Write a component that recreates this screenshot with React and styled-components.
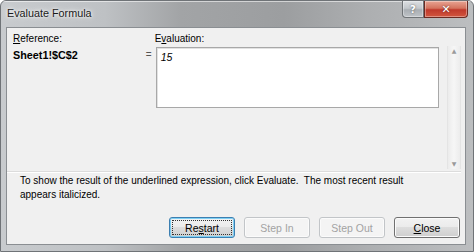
import styled, { createGlobalStyle } from "styled-components";

const GlobalStyle = createGlobalStyle`
  html, body { margin: 0; padding: 0; background: #ffffff; }
  body { font-family: "Liberation Sans", Arial, sans-serif; }
`;

const Window = styled.div`
  width: 474px;
  height: 252px;
  display: flex;
  flex-direction: column;
  box-sizing: border-box;
  border: 1px solid #6f7377;
  border-radius: 6px 6px 0 0;
  background: linear-gradient(
    to right,
    #c8cbce 0%,
    #bec1c4 22%,
    #a2a4a6 38%,
    #9c9ea0 60%,
    #adafb1 78%,
    #bcbec0 100%
  );
  overflow: hidden;
`;

const TitleBar = styled.div`
  height: 26px;
  display: flex;
  align-items: flex-start;
  justify-content: space-between;
  padding-left: 6px;
  box-shadow: inset 0 1px 0 rgba(255, 255, 255, 0.55);
`;

const Title = styled.div`
  font-size: 10.8px;
  line-height: 25px;
  color: #1a1a1a;
  text-shadow: 0 0 6px #ffffff, 0 0 3px #ffffff;
`;

const Controls = styled.div`
  display: flex;
  margin-right: 5px;
`;

const CaptionButton = styled.div`
  height: 17px;
  width: ${(p) => (p.close ? "44px" : "22px")};
  box-sizing: border-box;
  border: 1px solid ${(p) => (p.close ? "#6b2a22" : "#6f7376")};
  border-top: none;
  border-radius: ${(p) => (p.close ? "0 0 4px 0" : "0 0 0 4px")};
  display: flex;
  align-items: center;
  justify-content: center;
  color: #ffffff;
  font-family: "DejaVu Sans", sans-serif;
  font-weight: bold;
  font-size: ${(p) => (p.close ? "11px" : "10px")};
  text-shadow: 0 0 2px rgba(0, 0, 0, 0.6);
  background: ${(p) =>
    p.close
      ? "linear-gradient(to bottom, #e8a493 0%, #d4735e 45%, #c0392b 55%, #d2563f 100%)"
      : "linear-gradient(to bottom, #dcdfe2 0%, #c4c8cc 45%, #a9aeb3 55%, #bfc3c7 100%)"};
  box-shadow: inset 0 0 0 1px rgba(255, 255, 255, 0.35);
`;

const Client = styled.div`
  flex: 1;
  margin: 0 7px 6px 5px;
  background: #f0f0f0;
  border: 1px solid #8a8e92;
  display: flex;
  flex-direction: column;
  color: #000000;
  font-size: 10px;
`;

const TopPanel = styled.div`
  height: 139px;
  display: flex;
  padding: 4px 0 0 6px;
  border-bottom: 1px solid #dcdcdc;
  box-shadow: 0 1px 0 #ffffff;
  margin-right: 4px;
`;

const LeftCol = styled.div`
  width: 133px;
  display: flex;
  flex-direction: column;
`;

const Label = styled.div`
  line-height: 14px;
  height: 14px;
  white-space: nowrap;
  u { text-decoration-thickness: 1px; text-underline-offset: 1px; }
`;

const RefValue = styled.div`
  font-weight: bold;
  font-size: 10.8px;
  line-height: 16px;
  margin-top: 1px;
`;

const Equals = styled.div`
  width: 9px;
  padding-top: 15px;
  line-height: 16px;
  color: #555555;
  font-size: 10px;
`;

const EvalCol = styled.div`
  width: 285px;
  display: flex;
  flex-direction: column;
`;

const EvalBox = styled.div`
  height: 55px;
  margin-top: 1px;
  margin-left: 1px;
  background: #ffffff;
  border: 1px solid #a8a8a8;
  box-shadow: inset 1px 1px 0 #e2e2e2;
  padding: 2px 4px;
  font-style: italic;
  font-size: 10.5px;
  line-height: 14px;
`;

const ScrollBar = styled.div`
  width: 12px;
  margin: 14px 0 2px 8px;
  display: flex;
  flex-direction: column;
  justify-content: space-between;
  align-items: center;
  background: linear-gradient(to right, #ececec, #f6f6f6 50%, #ececec);
  border-left: 1px solid #e4e4e4;
  border-right: 1px solid #e4e4e4;
  color: #9a9a9a;
  font-size: 6px;
  line-height: 10px;
  font-family: "DejaVu Sans", sans-serif;
`;

const Hint = styled.p`
  margin: 0;
  padding: 2px 0 0 13px;
  line-height: 14px;
  white-space: nowrap;
`;

const ButtonRow = styled.div`
  margin-top: auto;
  display: flex;
  justify-content: flex-end;
  gap: 9px;
  padding: 0 5px 6px 0;
`;

const Button = styled.button`
  width: 66px;
  height: 21px;
  box-sizing: border-box;
  font-family: inherit;
  font-size: 10.5px;
  padding: 0;
  border-radius: 3px;
  position: relative;
  color: ${(p) => (p.disabled ? "#a3a3a3" : "#000000")};
  border: 1px solid
    ${(p) => (p.disabled ? "#c2c5c8" : p.primary ? "#3c7fb1" : "#707070")};
  background: ${(p) =>
    p.disabled
      ? "#f4f4f4"
      : "linear-gradient(to bottom, #f2f2f2 0%, #ebebeb 50%, #dddddd 50%, #cfcfcf 100%)"};
  box-shadow: ${(p) =>
    p.primary ? "inset 0 0 0 1px #7fd0f4" : "inset 0 0 0 1px #fbfbfb"};
  u { text-decoration-thickness: 1px; text-underline-offset: 1px; }
  ${(p) =>
    p.primary &&
    `
    &::after {
      content: "";
      position: absolute;
      inset: 2px;
      border: 1px dotted #333;
    }
  `}
`;

const App = () => {
  return (
    <>
      <GlobalStyle />
      <Window>
        <TitleBar>
          <Title>Evaluate Formula</Title>
          <Controls>
            <CaptionButton>?</CaptionButton>
            <CaptionButton close>✕</CaptionButton>
          </Controls>
        </TitleBar>
        <Client>
          <TopPanel>
            <LeftCol>
              <Label>
                <u>R</u>eference:
              </Label>
              <RefValue>Sheet1!$C$2</RefValue>
            </LeftCol>
            <Equals>=</Equals>
            <EvalCol>
              <Label>
                E<u>v</u>aluation:
              </Label>
              <EvalBox>15</EvalBox>
            </EvalCol>
            <ScrollBar>
              <span>▲</span>
              <span>▼</span>
            </ScrollBar>
          </TopPanel>
          <Hint>
            To show the result of the underlined expression, click Evaluate.&nbsp; The
            most recent result
            <br />
            appears italicized.
          </Hint>
          <ButtonRow>
            <Button primary>
              Re<u>s</u>tart
            </Button>
            <Button disabled>Step In</Button>
            <Button disabled>Step Out</Button>
            <Button>
              <u>C</u>lose
            </Button>
          </ButtonRow>
        </Client>
      </Window>
    </>
  );
};

export default App;
